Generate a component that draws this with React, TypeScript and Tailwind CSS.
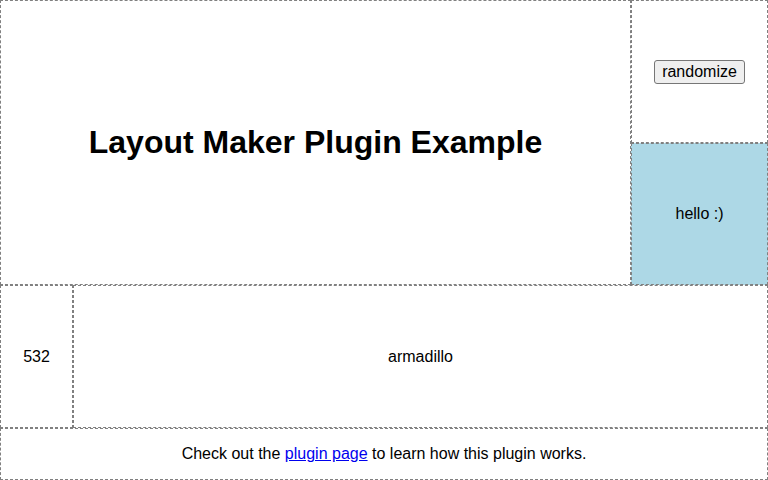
import React from 'react';

const cell = 'border border-dashed border-[#808080] flex items-center justify-center';

export default function App() {
  return (
    <div className="w-[768px] h-[480px] flex flex-col bg-white text-black font-['Liberation_Sans',Arial,sans-serif] text-base">
      {/* Top row */}
      <div className="flex h-[285px]">
        <div className={`${cell} w-[631px]`}>
          <h1 className="text-[32px] font-bold leading-none -mt-[2px]">Layout Maker Plugin Example</h1>
        </div>
        <div className="flex flex-col w-[137px]">
          <div className={`${cell} h-[143px]`}>
            <button className="border border-[#767676] rounded-[3px] bg-[#efefef] px-[7px] py-[2px] text-base leading-[18px]">
              randomize
            </button>
          </div>
          <div className={`${cell} h-[142px] bg-[#add8e6]`}>hello :)</div>
        </div>
      </div>

      {/* Middle row */}
      <div className="flex h-[143px]">
        <div className={`${cell} w-[73px]`}>532</div>
        <div className={`${cell} flex-1`}>armadillo</div>
      </div>

      {/* Bottom row */}
      <div className={`${cell} h-[52px]`}>
        <p>
          Check out the{' '}
          <a href="#" className="text-[#0000ee] underline">
            plugin page
          </a>{' '}
          to learn how this plugin works.
        </p>
      </div>
    </div>
  );
}
